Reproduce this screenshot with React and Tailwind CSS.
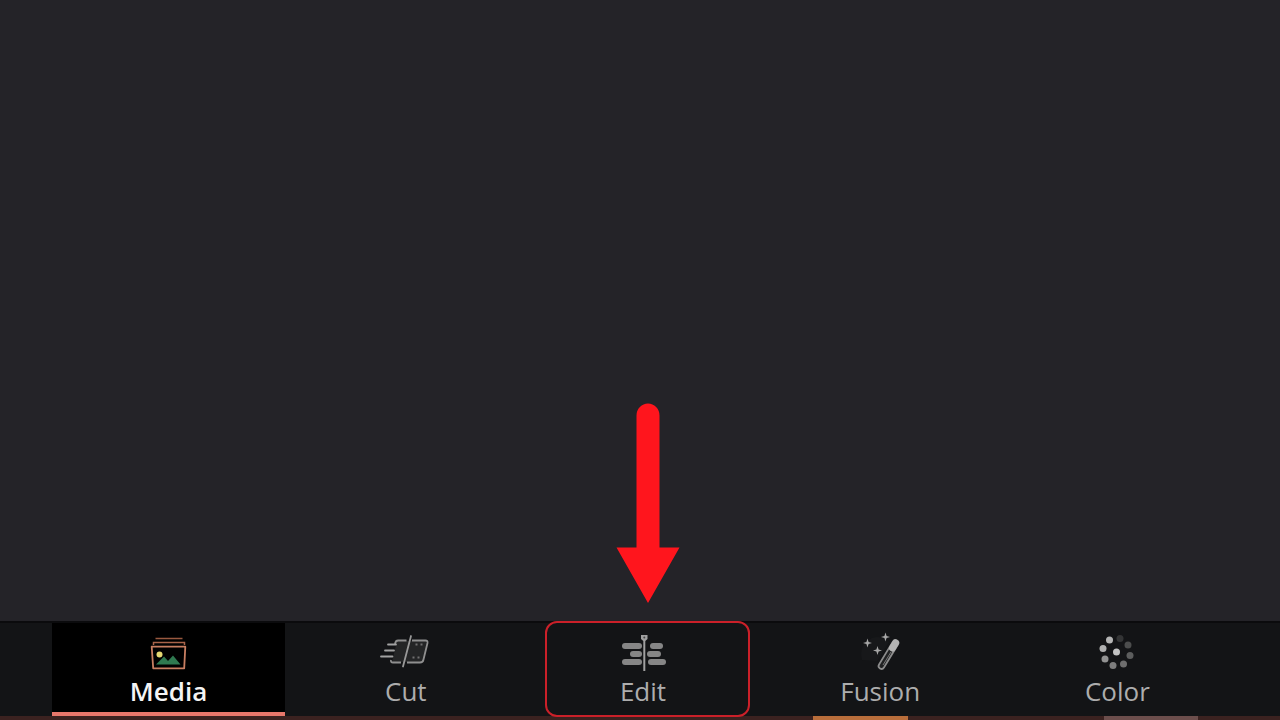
import React, { useState } from 'react';
import clsx from 'clsx';

function MediaIcon() {
  return (
    <svg viewBox="-1 0 60 45" className="w-[60px] h-[45px]" fill="none" aria-hidden="true">
      <path d="M15.500 8.500H42.500" stroke="#99583f" strokeWidth="1.500" />
      <path d="M13.500 15V12.500H44.500V15" stroke="#a9644a" strokeWidth="1.500" />
      <path d="M11.700 16.700H45.300L44.200 38.300H13.200Z" stroke="#c87e61" strokeWidth="1.800" strokeLinejoin="round" />
      <path d="M16 34.500L24 26.500L28 31L33 25.500L40.500 34.500Z" fill="#2f7a50" />
      <circle cx="19.500" cy="24.500" r="3" fill="#e6d972" />
    </svg>
  );
}

function CutIcon() {
  return (
    <svg viewBox="1 0 60 45" className="w-[60px] h-[45px]" fill="none" aria-hidden="true">
      <path d="M22 11H53L48 32H17Z" fill="#242526" />
      <path d="M20 14Q20.500 10.500 23 10.500H31.500M37 10.500H50.500Q53 10.500 52.500 13L48.500 29.500Q48 32.500 45 32.500H32M26 32.500H18Q15.500 32.500 16 30" stroke="#8f8f8f" strokeWidth="1.800" />
      <path d="M13 14.500H21M10 20.500H19M6 26.500H17.500" stroke="#a2a2a2" strokeWidth="1.800" strokeLinecap="round" />
      <path d="M36 6L28 36.500" stroke="#999999" strokeWidth="1.800" strokeLinecap="round" />
      <path d="M40.500 14.500h2M45.500 14.500h2M37.500 27.500h2M42.500 27.500h2" stroke="#707070" strokeWidth="2" />
    </svg>
  );
}

function EditIcon() {
  return (
    <svg viewBox="-2 0 60 45" className="w-[60px] h-[45px]" aria-hidden="true">
      <g fill="#868686">
        <rect x="7" y="13" width="20" height="6" rx="3" />
        <rect x="15" y="21" width="12" height="6" rx="3" />
        <rect x="7" y="29" width="20" height="6" rx="3" />
        <rect x="35" y="13" width="13" height="6" rx="3" />
        <rect x="32" y="21" width="14" height="6" rx="3" />
        <rect x="33" y="29" width="18" height="6" rx="3" />
      </g>
      <path d="M26 5H32.500V9L30.300 11V41H28.300V11L26 9Z" fill="#a0a0a0" />
      <circle cx="29.300" cy="7.500" r="1" fill="#444444" />
    </svg>
  );
}

function FusionIcon() {
  return (
    <svg viewBox="-5 2 60 45" className="w-[60px] h-[45px]" fill="none" aria-hidden="true">
      <path d="M7 32Q3 17 17 10Q27 7 34 14L22 33Z" fill="#17181a" />
      <path
        d="M12.500 10.500L13.600 13.900L17 15L13.600 16.100L12.500 19.500L11.400 16.100L8 15L11.400 13.900ZM30.500 4.500L31.600 7.900L35 9L31.600 10.100L30.500 13.500L29.400 10.100L26 9L29.400 7.900ZM22.500 18L23.600 21.400L27 22.500L23.600 23.600L22.500 27L21.400 23.600L18 22.500L21.400 21.400Z"
        fill="#a6a6a6"
      />
      <path d="M40.500 15L26.500 38" stroke="#8c8c8c" strokeWidth="7.500" strokeLinecap="round" />
      <path d="M37 20.500L26.500 38" stroke="#202122" strokeWidth="4" strokeLinecap="round" />
      <path d="M36 24L28 37" stroke="#777777" strokeWidth="1" />
      <path d="M40.500 15L37.500 20" stroke="#b4b4b4" strokeWidth="7" strokeLinecap="round" />
    </svg>
  );
}

const COLOR_DOTS = [
  { x: 22.5, y: 10, fill: '#b5b5b5' },
  { x: 33, y: 8.5, fill: '#333435' },
  { x: 41, y: 15, fill: '#4c4d4d' },
  { x: 43, y: 25.5, fill: '#5c5d5d' },
  { x: 36.5, y: 34, fill: '#6e6e6e' },
  { x: 26, y: 35.5, fill: '#7d7d7d' },
  { x: 18, y: 29, fill: '#929292' },
  { x: 16, y: 18.5, fill: '#b0b0b0' },
  { x: 29.5, y: 22, fill: '#c2c2c2' },
];

function ColorIcon() {
  return (
    <svg viewBox="0 0 60 45" className="w-[60px] h-[45px]" aria-hidden="true">
      {COLOR_DOTS.map(d => (
        <circle key={`${d.x}-${d.y}`} cx={d.x} cy={d.y} r="3.500" fill={d.fill} />
      ))}
    </svg>
  );
}

// Red box around a tab, with an arrow pointing down at it
function Callout() {
  return (
    <span className="pointer-events-none absolute -top-0.5 -bottom-[5px] left-[19px] right-2.5 rounded-xl border-2 border-[#cb2029]">
      <svg
        viewBox="0 0 64 200"
        className="absolute bottom-full left-1/2 -translate-x-1/2 mb-5 w-16 h-[200px]"
        aria-hidden="true"
      >
        <path d="M20.500 12.500A11.500 12 0 0 1 43.500 12.500V144.500H63.500L32 200L0.500 144.500H20.500Z" fill="#ff151d" />
      </svg>
    </span>
  );
}

const PAGES = [
  { id: 'media', label: 'Media', Icon: MediaIcon },
  { id: 'cut', label: 'Cut', Icon: CutIcon },
  { id: 'edit', label: 'Edit', Icon: EditIcon },
  { id: 'fusion', label: 'Fusion', Icon: FusionIcon },
  { id: 'color', label: 'Color', Icon: ColorIcon },
];

export default function App() {
  const [active, setActive] = useState('media');

  return (
    <div className="flex flex-col min-h-screen bg-[#242328] font-['Open_Sans','Noto_Sans',sans-serif]">
      <main className="flex-1" />

      <nav className="flex gap-1 pl-[52px] pr-[46px] border-t-2 border-[#0b0b0d] bg-[#131416]">
        {PAGES.map(({ id, label, Icon }) => (
          <button
            key={id}
            type="button"
            onClick={() => setActive(id)}
            aria-current={active === id ? 'page' : undefined}
            className={clsx(
              'relative flex flex-1 basis-0 flex-col items-center pt-[7px] pb-[5px] border-b-4 text-[26px] leading-8',
              active === id
                ? 'bg-black border-[#e8776b] text-[#f4f4f4] font-semibold'
                : 'border-transparent text-[#adadad]'
            )}
          >
            <Icon />
            <span>{label}</span>
            {id === 'edit' && <Callout />}
          </button>
        ))}
      </nav>

      {/* Strip under the tabs */}
      <div className="flex h-1 bg-[#3b2220]">
        <div className="w-[813px]" />
        <div className="w-[95px] bg-[#b96e3b]" />
        <div className="w-[196px]" />
        <div className="w-[94px] bg-[#6c4e4c]" />
      </div>
    </div>
  );
}
